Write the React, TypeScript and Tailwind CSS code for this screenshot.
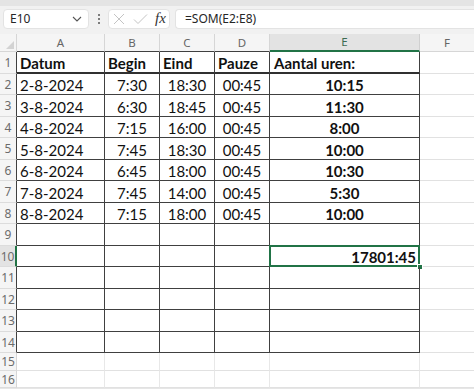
import React from "react";

const GREEN = "#217346";

const data: string[][] = [
  ["2-8-2024", "7:30", "18:30", "00:45", "10:15"],
  ["3-8-2024", "6:30", "18:45", "00:45", "11:30"],
  ["4-8-2024", "7:15", "16:00", "00:45", "8:00"],
  ["5-8-2024", "7:45", "18:30", "00:45", "10:00"],
  ["6-8-2024", "6:45", "18:00", "00:45", "10:30"],
  ["7-8-2024", "7:45", "14:00", "00:45", "5:30"],
  ["8-8-2024", "7:15", "18:00", "00:45", "10:00"],
];

const cols = ["A", "B", "C", "D", "E", "F"];

function RowHeader({ n, dark, selected, h }: { n: number; dark: boolean; selected?: boolean; h: string }) {
  return (
    <div
      className={`${h} flex items-center justify-center border-b border-b-[#dcdcdc] text-[12px] text-[#6b6b6b] ${
        selected ? "bg-[#e3e3e3] border-r-2 border-r-[#217346]" : dark ? "bg-[#f5f5f5] border-r border-r-[#404040]" : "bg-[#f5f5f5] border-r border-r-[#d6d6d6]"
      }`}
      style={{ fontFamily: '"Noto Sans", sans-serif' }}
    >
      <span className="leading-none pt-[2px]">{n}</span>
    </div>
  );
}

export default function App() {
  const rows: React.ReactNode[] = [];

  // rows 1..14 (bordered table)
  for (let r = 1; r <= 14; r++) {
    const isHeader = r === 1;
    const d = r >= 2 && r <= 8 ? data[r - 2] : null;
    const bottom = isHeader ? "border-b-2 border-b-[#303030]" : "border-b border-b-[#404040]";
    const h = "h-[21.5px]";
    rows.push(<RowHeader key={`rh${r}`} n={r} dark selected={r === 10} h={h} />);
    // A
    rows.push(
      <div key={`a${r}`} className={`${h} border-r border-r-[#404040] ${bottom} flex items-end pl-[3px] leading-[18px] ${isHeader ? "font-bold" : ""}`}>
        {isHeader ? "Datum" : d ? d[0] : ""}
      </div>
    );
    // B
    rows.push(
      <div key={`b${r}`} className={`${h} border-r border-r-[#404040] ${bottom} flex items-end leading-[18px] ${isHeader ? "font-bold pl-[3px]" : "justify-center"}`}>
        {isHeader ? "Begin" : d ? d[1] : ""}
      </div>
    );
    // C
    rows.push(
      <div key={`c${r}`} className={`${h} border-r border-r-[#404040] ${bottom} flex items-end leading-[18px] ${isHeader ? "font-bold pl-[3px]" : "justify-center"}`}>
        {isHeader ? "Eind" : d ? d[2] : ""}
      </div>
    );
    // D
    rows.push(
      <div key={`d${r}`} className={`${h} border-r border-r-[#404040] ${bottom} flex items-end leading-[18px] ${isHeader ? "font-bold pl-[3px]" : "justify-center"}`}>
        {isHeader ? "Pauze" : d ? d[3] : ""}
      </div>
    );
    // E
    rows.push(
      <div
        key={`e${r}`}
        className={`${h} relative border-r border-r-[#404040] ${bottom} flex items-end leading-[18px] font-bold ${
          isHeader ? "pl-[4px]" : r === 10 ? "justify-end pr-[3px]" : "justify-center"
        }`}
      >
        {isHeader ? "Aantal uren:" : d ? d[4] : r === 10 ? "17801:45" : ""}
        {r === 10 && (
          <>
            <div className="absolute -top-[1px] -left-[1px] -right-[1px] -bottom-[1px] border-2 border-[#217346] pointer-events-none" />
            <div className="absolute -right-[4px] -bottom-[4px] w-[6px] h-[6px] bg-[#217346] border border-white" />
          </>
        )}
      </div>
    );
    // F
    rows.push(<div key={`f${r}`} className={`${h} border-b border-b-[#e1e1e1]`} />);
  }

  for (let r = 15; r <= 16; r++) {
    const h = "h-[17.5px]";
    rows.push(<RowHeader key={`rh${r}`} n={r} dark={false} h={h} />);
    for (let c = 0; c < 6; c++) {
      rows.push(
        <div key={`x${r}-${c}`} className={`${h} border-b border-b-[#e1e1e1] ${c < 5 ? "border-r border-r-[#e8e8e8]" : ""}`} />
      );
    }
  }

  return (
    <div className="w-[474px] h-[389px] overflow-hidden bg-[#e6e6e6] text-[#111]" style={{ fontFamily: "Lato, sans-serif" }}>
      {/* top strip */}
      <div className="h-[6px] bg-[#e4e4e4]" />
      {/* formula bar */}
      <div className="h-[28px] bg-[#f1f1f1] flex items-start pt-[3px] pl-[3px]" style={{ fontFamily: '"Noto Sans", sans-serif' }}>
        <div className="w-[86px] h-[20px] bg-white rounded-[4px] border border-[#e3e3e3] flex items-center pl-[6px] pr-[5px] text-[12px] text-[#262626]">
          <span className="flex-1">E10</span>
          <svg width="10" height="6" viewBox="0 0 10 6" className="mr-[1px]">
            <path d="M1 1 L5 5 L9 1" fill="none" stroke="#555" strokeWidth="1.1" />
          </svg>
        </div>
        <div className="w-[19px] h-[20px] flex flex-col items-center justify-center gap-[2px]">
          <div className="w-[2px] h-[2px] rounded-full bg-[#555]" />
          <div className="w-[2px] h-[2px] rounded-full bg-[#555]" />
          <div className="w-[2px] h-[2px] rounded-full bg-[#555]" />
        </div>
        <div className="w-[62px] h-[20px] bg-white rounded-[4px] border border-[#e3e3e3] flex items-center pl-[4px]">
          <svg width="12" height="12" viewBox="0 0 12 12">
            <path d="M1 1 L11 11 M11 1 L1 11" fill="none" stroke="#c4c4c4" strokeWidth="1" />
          </svg>
          <svg width="15" height="12" viewBox="0 0 15 12" className="ml-[8px]">
            <path d="M1 6.5 L5 10.5 L14 1.5" fill="none" stroke="#c4c4c4" strokeWidth="1" />
          </svg>
          <span
            className="ml-[7px] italic text-[15px] leading-none text-[#333] pb-[1px]"
            style={{ fontFamily: '"Liberation Serif", serif' }}
          >
            fx
          </span>
        </div>
        <div className="ml-[5px] flex-1 h-[20px] bg-white rounded-l-[4px] border border-r-0 border-[#e3e3e3] flex items-center pl-[9px] text-[12px] text-[#262626]">
          =SOM(E2:E8)
        </div>
      </div>
      {/* grid */}
      <div className="bg-white grid grid-cols-[17px_88px_55px_55px_55px_150px_1fr] text-[15px]">
        {/* column headers */}
        <div className="h-[18px] bg-[#f5f5f5] border-r border-r-[#d6d6d6] border-b border-b-[#d6d6d6] relative overflow-hidden">
          <div className="absolute right-[2px] bottom-[2px] w-0 h-0 border-l-[8px] border-l-transparent border-b-[8px] border-b-[#d3d3d3]" />
        </div>
        {cols.map((c, i) => (
          <div
            key={c}
            className={`h-[18px] flex items-center justify-center text-[11.5px] ${
              i === 4
                ? "bg-[#e3e3e3] text-[#3d6b52] border-b-2 border-b-[#217346] border-r border-r-[#d0d0d0]"
                : i < 4
                ? "bg-[#f5f5f5] text-[#666] border-b border-b-[#404040] border-r border-r-[#d6d6d6]"
                : "bg-[#f5f5f5] text-[#666] border-b border-b-[#d6d6d6]"
            }`}
            style={{ fontFamily: '"Noto Sans", sans-serif' }}
          >
            {c}
          </div>
        ))}
        {rows}
      </div>
    </div>
  );
}
